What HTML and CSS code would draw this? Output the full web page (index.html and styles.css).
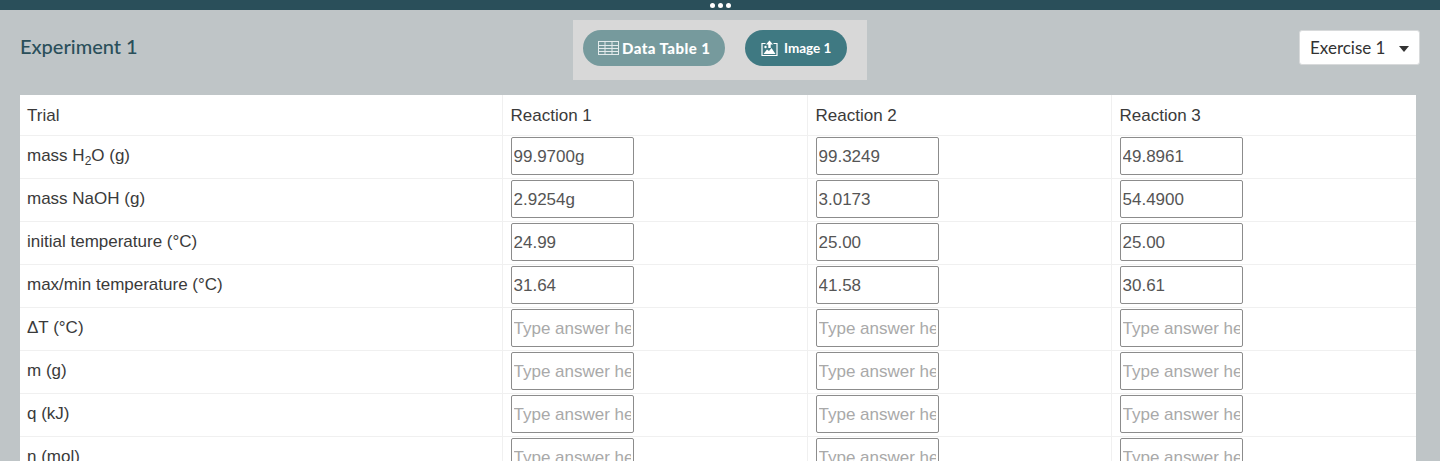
FILE: index.html
```html
<!DOCTYPE html>
<html lang="en">
<head>
    <meta charset="UTF-8">
    <meta name="viewport" content="width=device-width, initial-scale=1.0">
    <title>Experiment 1</title>
    <link rel="stylesheet" href="styles.css">
</head>
<body>
    <!-- Top bar with drag handle -->
    <div class="topbar">
        <span class="dot"></span>
        <span class="dot"></span>
        <span class="dot"></span>
    </div>

    <!-- Title, tabs and exercise picker -->
    <div class="header">
        <h1 class="title">Experiment 1</h1>
        <div class="tabs">
            <button class="tab tab-table">
                <svg class="tab-icon" width="21" height="14" viewBox="0 0 21 14" fill="none" stroke="#fff" stroke-width="1" opacity="0.8">
                    <rect x="0.5" y="0.5" width="20" height="13"/>
                    <path d="M0 4.5H21M0 7.5H21M0 10.5H21M7 1V14M14 1V14"/>
                </svg>
                Data Table 1
            </button>
            <button class="tab tab-image">
                <svg class="tab-icon" width="17" height="17" viewBox="0 0 17 17">
                    <path d="M4.5 3.5H1V15.5H16V3.5H12.5" fill="none" stroke="#fff" stroke-width="1.2"/>
                    <path d="M2.5 14L6 9.5L8 11L10.5 8L14.5 14Z" fill="#fff"/>
                    <circle cx="4.5" cy="7" r="1.2" fill="#fff"/>
                    <path d="M8.5 0.5L12 4.5H9.7V8H7.3V4.5H5Z" fill="#fff"/>
                </svg>
                Image 1
            </button>
        </div>
        <button class="picker">Exercise 1<span class="caret"></span></button>
    </div>

    <!-- Data table -->
    <table class="data">
        <colgroup>
            <col class="col-label">
            <col class="col-wide">
            <col class="col-narrow">
            <col class="col-wide">
        </colgroup>
        <thead>
            <tr>
                <th>Trial</th>
                <th class="value">Reaction 1</th>
                <th class="value">Reaction 2</th>
                <th class="value">Reaction 3</th>
            </tr>
        </thead>
        <tbody>
            <tr>
                <td>mass H<sub>2</sub>O (g)</td>
                <td class="value"><input class="answer" value="99.9700g"></td>
                <td class="value"><input class="answer" value="99.3249"></td>
                <td class="value"><input class="answer" value="49.8961"></td>
            </tr>
            <tr>
                <td>mass NaOH (g)</td>
                <td class="value"><input class="answer" value="2.9254g"></td>
                <td class="value"><input class="answer" value="3.0173"></td>
                <td class="value"><input class="answer" value="54.4900"></td>
            </tr>
            <tr>
                <td>initial temperature (°C)</td>
                <td class="value"><input class="answer" value="24.99"></td>
                <td class="value"><input class="answer" value="25.00"></td>
                <td class="value"><input class="answer" value="25.00"></td>
            </tr>
            <tr>
                <td>max/min temperature (°C)</td>
                <td class="value"><input class="answer" value="31.64"></td>
                <td class="value"><input class="answer" value="41.58"></td>
                <td class="value"><input class="answer" value="30.61"></td>
            </tr>
            <tr>
                <td>ΔT (°C)</td>
                <td class="value"><input class="answer" placeholder="Type answer here"></td>
                <td class="value"><input class="answer" placeholder="Type answer here"></td>
                <td class="value"><input class="answer" placeholder="Type answer here"></td>
            </tr>
            <tr>
                <td>m (g)</td>
                <td class="value"><input class="answer" placeholder="Type answer here"></td>
                <td class="value"><input class="answer" placeholder="Type answer here"></td>
                <td class="value"><input class="answer" placeholder="Type answer here"></td>
            </tr>
            <tr>
                <td>q (kJ)</td>
                <td class="value"><input class="answer" placeholder="Type answer here"></td>
                <td class="value"><input class="answer" placeholder="Type answer here"></td>
                <td class="value"><input class="answer" placeholder="Type answer here"></td>
            </tr>
            <tr>
                <td>n (mol)</td>
                <td class="value"><input class="answer" placeholder="Type answer here"></td>
                <td class="value"><input class="answer" placeholder="Type answer here"></td>
                <td class="value"><input class="answer" placeholder="Type answer here"></td>
            </tr>
        </tbody>
    </table>
</body>
</html>
```

FILE: styles.css
```css
html, body {
    height: 100%;
    overflow: hidden;
}

body {
    margin: 0;
    font-family: "Liberation Sans", Arial, sans-serif;
    background-color: #bfc5c7;
}

/* Top bar */
.topbar {
    height: 10px;
    background-color: #2a4f5a;
    display: flex;
    justify-content: center;
    align-items: center;
    gap: 3px;
}

.dot {
    width: 5px;
    height: 5px;
    border-radius: 50%;
    background-color: #fff;
}

/* Header row */
.header {
    display: grid;
    grid-template-columns: 1fr auto 1fr;
    align-items: start;
    padding: 10px 20px 15px;
}

.title {
    margin: 0;
    padding-top: 14px;
    font-family: Lato, sans-serif;
    font-size: 20px;
    line-height: 24px;
    font-weight: 500;
    color: #2a4f5a;
}

.tabs {
    display: flex;
    gap: 20px;
    padding: 10px 20px 10px 10px;
    height: 60px;
    box-sizing: border-box;
    background-color: #d8d8d8;
}

.tab {
    display: flex;
    align-items: center;
    height: 36px;
    border: none;
    border-radius: 18px;
    color: #fff;
    font-family: Lato, sans-serif;
}

.tab-icon {
    display: block;
    flex: none;
}

.tab-table {
    width: 142px;
    padding: 0 0 0 15px;
    gap: 3px;
    background-color: #769a9d;
    font-size: 15px;
    font-weight: 900;
    letter-spacing: 0.45px;
}

.tab-image {
    width: 102px;
    padding: 0 0 0 16px;
    gap: 6px;
    background-color: #3f7982;
    font-size: 13.5px;
    font-weight: 700;
}

.picker {
    justify-self: end;
    display: flex;
    align-items: center;
    width: 121px;
    height: 35px;
    margin-top: 10px;
    padding: 0 0 0 10px;
    border: 1px solid #d8dadb;
    border-radius: 3px;
    background-color: #fff;
    color: #333;
    font-family: Lato, sans-serif;
    font-size: 17px;
    box-sizing: border-box;
}

.caret {
    margin: 3px 0 0 14px;
    border-left: 5.5px solid transparent;
    border-right: 5.5px solid transparent;
    border-top: 6px solid #333;
}

/* Table */
.data {
    width: 1396px;
    margin-left: 20px;
    table-layout: fixed;
    border-collapse: collapse;
    background-color: #fff;
    color: #3a3a3a;
    font-size: 17px;
}

.col-label {
    width: 482px;
}

.col-wide {
    width: 305px;
}

.col-narrow {
    width: 304px;
}

.data th,
.data td {
    height: 43px;
    padding: 0 0 1px 7px;
    box-sizing: border-box;
    font-weight: 400;
    text-align: left;
    border-bottom: 1px solid #f0f0f0;
}

.data th {
    height: 40px;
    padding-top: 3px;
    padding-bottom: 0;
}

.data th.value,
.data td.value {
    padding-left: 8px;
    border-left: 1px solid #f0f0f0;
}

.data td.value {
    padding-top: 1px;
    padding-bottom: 0;
    vertical-align: top;
}

.data sub {
    font-size: 12px;
    line-height: 0;
}

.answer {
    display: block;
    width: 123px;
    height: 38px;
    padding: 2px 2px 0;
    box-sizing: border-box;
    border: 1px solid #8c8c8c;
    border-radius: 2px;
    color: #555;
    font-family: "Liberation Sans", Arial, sans-serif;
    font-size: 17px;
}

.answer::placeholder {
    color: #a9a9a9;
    opacity: 1;
}
```
